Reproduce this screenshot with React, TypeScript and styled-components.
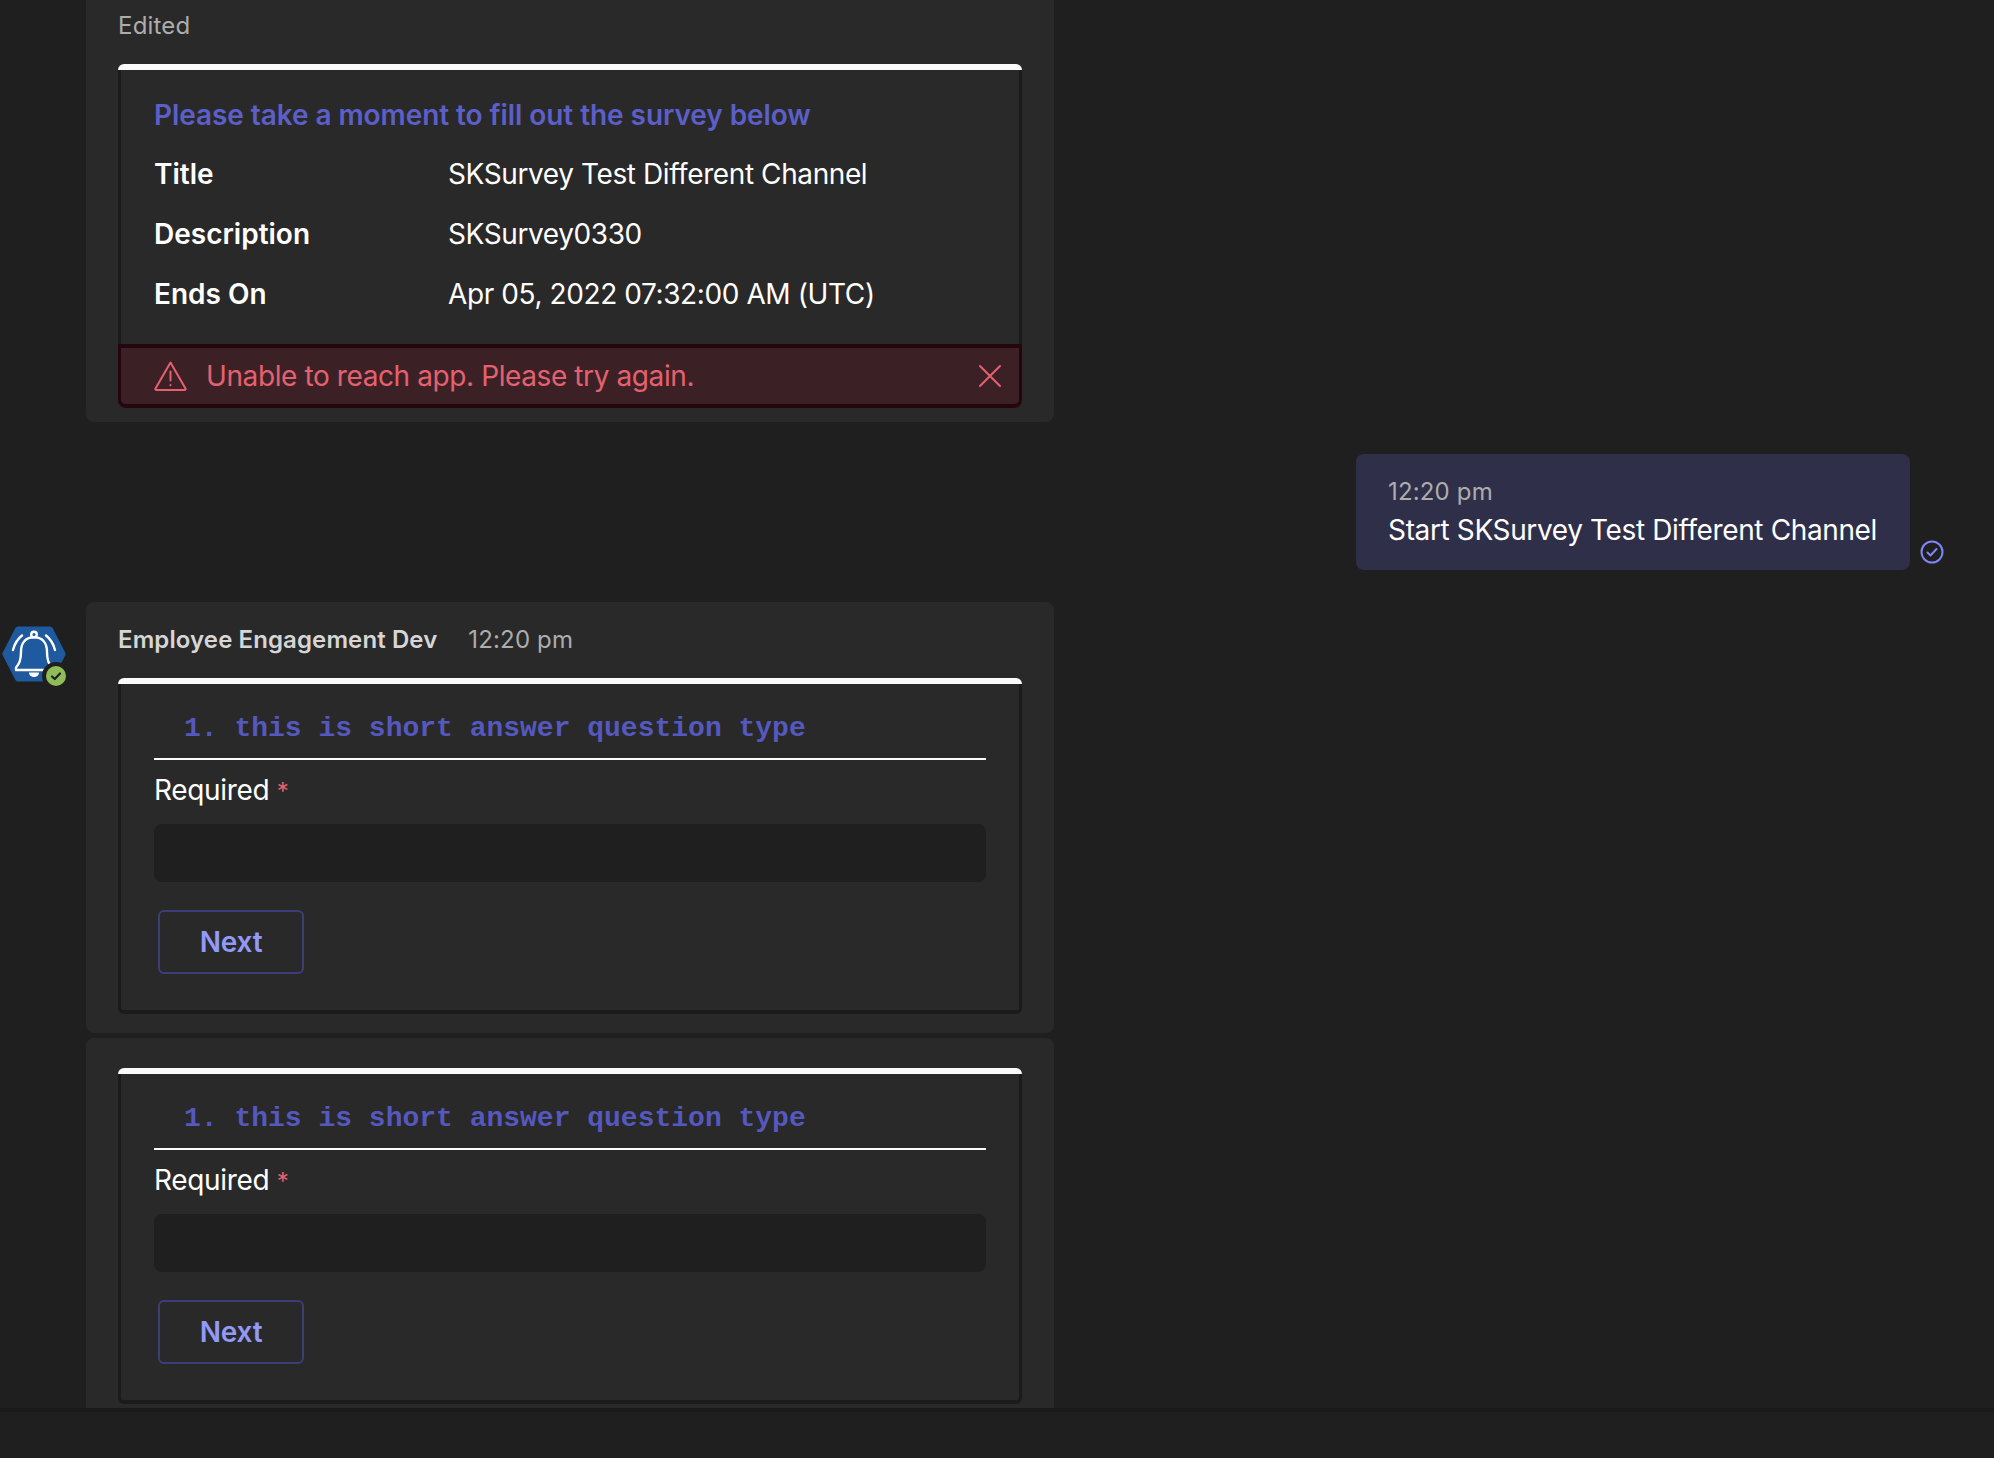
import React from "react";
import styled, { createGlobalStyle } from "styled-components";

const GlobalStyle = createGlobalStyle`
  * { box-sizing: border-box; }
  html, body { margin: 0; height: 100%; background: #1f1f1f; }
  body { font-family: Inter, "Noto Sans", sans-serif; color: #fff; overflow: hidden; }
`;

const Page = styled.div`
  height: 100vh;
  display: flex;
  flex-direction: column;
  overflow: hidden;
`;

const Chat = styled.main`
  flex: 1;
  min-height: 0;
  overflow: hidden;
  display: flex;
  flex-direction: column;
`;

const Footer = styled.footer`
  flex: 0 0 50px;
  background: #1f1f1f;
  border-top: 4px solid #1a1a1a;
`;

const Row = styled.div<{ $top?: number }>`
  display: flex;
  align-items: flex-start;
  margin-top: ${(p) => p.$top ?? 0}px;
`;

const AvatarSlot = styled.div`
  flex: 0 0 86px;
  padding: 23px 0 0 2px;
`;

const Avatar = styled.div`
  position: relative;
  width: 64px;
  height: 58px;
`;

const Badge = styled.span`
  position: absolute;
  left: 44px;
  top: 41px;
  width: 20px;
  height: 20px;
  border-radius: 50%;
  background: #8fbc58;
  box-shadow: 0 0 0 4px #1f1f1f;
  display: flex;
  align-items: center;
  justify-content: center;
`;

const Stack = styled.div`
  display: flex;
  flex-direction: column;
  gap: 5px;
`;

const Card = styled.article<{ $top: number; $bottom: number; $radius?: string }>`
  width: 968px;
  background: #292929;
  padding: ${(p) => p.$top}px 32px ${(p) => p.$bottom}px;
  border-radius: ${(p) => p.$radius ?? "8px"};
`;

const Edited = styled.div`
  font-size: 24px;
  line-height: 32px;
  letter-spacing: 0.2px;
  color: #adadad;
  margin: -6px 0 22px;
`;

const Meta = styled.div`
  display: flex;
  align-items: center;
  gap: 31px;
  height: 32px;
  margin-bottom: 22px;
`;

const Sender = styled.span`
  font-size: 24px;
  font-weight: 600;
  line-height: 32px;
  letter-spacing: 0.1px;
  color: #d6d6d6;
`;

const Time = styled.span`
  font-size: 24px;
  line-height: 32px;
  letter-spacing: 0.15px;
  color: #adadad;
`;

const Panel = styled.section`
  border-top: 6px solid #fafafa;
  border-radius: 6px;
  background: #292929;
`;

const PanelBody = styled.div<{ $flush?: boolean }>`
  border-style: solid;
  border-color: #1b1b1b;
  border-width: 0 3px ${(p) => (p.$flush ? 0 : 4)}px;
  border-radius: ${(p) => (p.$flush ? "0" : "0 0 6px 6px")};
`;

const Survey = styled.div`
  padding: 27px 33px 32px;
`;

const Heading = styled.h2`
  margin: 0 0 23px;
  font-size: 28px;
  line-height: 36px;
  font-weight: 600;
  letter-spacing: -0.07px;
  color: #5b5fc7;
`;

const Facts = styled.dl`
  margin: 0;
  display: grid;
  grid-template-columns: 294px 1fr;
  row-gap: 24px;
  font-size: 28px;
  line-height: 36px;
`;

const FactLabel = styled.dt`
  font-weight: 600;
`;

const FactValue = styled.dd`
  margin: 0;
  letter-spacing: -0.4px;
`;

const ErrorBanner = styled.div`
  height: 64px;
  display: flex;
  align-items: center;
  padding: 0 18px 0 33px;
  background: #3b2126;
  border: solid #25060e;
  border-width: 4px 3px;
  border-radius: 0 0 8px 8px;
  color: #e5616f;
  font-size: 28px;
  letter-spacing: -0.4px;
`;

const ErrorText = styled.span`
  flex: 1;
  margin-left: 19px;
`;

const Form = styled.div`
  padding: 27px 33px 36px;
`;

const Question = styled.h3`
  margin: 0;
  padding: 0 0 11px 30px;
  border-bottom: 2px solid #fafafa;
  font-family: "Liberation Mono", "Courier New", monospace;
  font-size: 28px;
  line-height: 36px;
  font-weight: 700;
  color: #5558bd;
`;

const Required = styled.div`
  margin: 12px 0 14px;
  font-size: 28px;
  line-height: 36px;
  letter-spacing: -0.34px;
`;

const Star = styled.span`
  color: #e5616f;
  font-size: 24px;
`;

const AnswerInput = styled.input`
  display: block;
  width: 100%;
  height: 58px;
  border: 0;
  border-radius: 8px;
  background: #1f1f1f;
`;

const NextButton = styled.button`
  display: block;
  width: 146px;
  height: 64px;
  margin: 28px 0 0 4px;
  background: transparent;
  border: 2px solid #3d3e78;
  border-radius: 6px;
  color: #9299f7;
  font-family: inherit;
  font-size: 28px;
  font-weight: 600;
  letter-spacing: -0.2px;
`;

const OwnRow = styled.div`
  display: flex;
  justify-content: flex-end;
  align-items: flex-end;
  gap: 10px;
  padding-right: 50px;
  margin-top: 32px;
`;

const Bubble = styled.div`
  padding: 22px 33px 22px 32px;
  background: #2f2f4a;
  border-radius: 8px;
`;

const BubbleTime = styled(Time)`
  display: block;
  margin-bottom: 4px;
`;

const BubbleText = styled.div`
  font-size: 28px;
  line-height: 36px;
  letter-spacing: -0.37px;
`;

const Delivered = styled.svg`
  display: block;
  margin-bottom: 6px;
`;

function BotAvatar() {
  return (
    <Avatar>
      <svg width="64" height="58" viewBox="0 0 64 58" fill="none">
        <path d="M16 1.5h32a3 3 0 0 1 2.6 1.5l12.6 24.5a3 3 0 0 1 0 3L50.600 55a3 3 0 0 1-2.600 1.500H16a3 3 0 0 1-2.600-1.500L.800 30.500a3 3 0 0 1 0-3L13.400 3A3 3 0 0 1 16 1.500z" fill="#1f5a9e" />
        <g stroke="#fff" strokeWidth="2.400" strokeLinecap="round" strokeLinejoin="round">
          <circle cx="32" cy="9.500" r="2.800" />
          <path d="M32 12.300c-9 0-13 6.200-13 14.700 0 8-1.500 12-5 15.500V45h36v-2.500c-3.500-3.500-5-7.500-5-15.500 0-8.500-4-14.700-13-14.700z" />
          <path d="M20 10.500c-4.500 3.500-7.500 8.500-9 14.500M44 10.500c4.500 3.500 7.500 8.500 9 14.500" />
        </g>
        <path d="M27 47.500h10c0 6-10 6-10 0z" fill="#fff" />
      </svg>
      <Badge>
        <svg width="12" height="12" viewBox="0 0 12 12" fill="none">
          <path d="M2 6.500l2.800 2.500L10 3.500" stroke="#1f1f1f" strokeWidth="2.200" strokeLinecap="round" strokeLinejoin="round" />
        </svg>
      </Badge>
    </Avatar>
  );
}

function QuestionForm() {
  return (
    <Form>
      <Question>1. this is short answer question type</Question>
      <Required>
        Required <Star>*</Star>
      </Required>
      <AnswerInput aria-label="Required" />
      <NextButton>Next</NextButton>
    </Form>
  );
}

export default function App() {
  return (
    <Page>
      <GlobalStyle />
      <Chat>
        <Row>
          <AvatarSlot />
          <Card $top={16} $bottom={14} $radius="0 0 8px 8px">
            <Edited>Edited</Edited>
            <Panel>
              <PanelBody $flush>
                <Survey>
                  <Heading>Please take a moment to fill out the survey below</Heading>
                  <Facts>
                    <FactLabel>Title</FactLabel>
                    <FactValue>SKSurvey Test Different Channel</FactValue>
                    <FactLabel>Description</FactLabel>
                    <FactValue>SKSurvey0330</FactValue>
                    <FactLabel>Ends On</FactLabel>
                    <FactValue>Apr 05, 2022 07:32:00 AM (UTC)</FactValue>
                  </Facts>
                </Survey>
              </PanelBody>
              <ErrorBanner>
                <svg width="33" height="30" viewBox="0 0 33 30" fill="none" stroke="#e5616f" strokeWidth="2" strokeLinecap="round" strokeLinejoin="round">
                  <path d="M16.500 1.500L1.500 27.500a1 1 0 0 0 .9 1.500h28.200a1 1 0 0 0 .9-1.500L16.500 1.500z" />
                  <path d="M16.500 10.500v9" />
                  <path d="M16.500 24v.2" />
                </svg>
                <ErrorText>Unable to reach app. Please try again.</ErrorText>
                <svg width="22" height="22" viewBox="0 0 22 22" fill="none" stroke="#e5616f" strokeWidth="2" strokeLinecap="round">
                  <path d="M1 1l20 20M21 1L1 21" />
                </svg>
              </ErrorBanner>
            </Panel>
          </Card>
        </Row>

        <OwnRow>
          <Bubble>
            <BubbleTime>12:20 pm</BubbleTime>
            <BubbleText>Start SKSurvey Test Different Channel</BubbleText>
          </Bubble>
          <Delivered width="24" height="24" viewBox="0 0 24 24" fill="none" stroke="#7f85f5" strokeWidth="2" strokeLinecap="round" strokeLinejoin="round">
            <circle cx="12" cy="12" r="10.500" />
            <path d="M7.500 12.500l3 3 6-6.500" />
          </Delivered>
        </OwnRow>

        <Row $top={32}>
          <AvatarSlot>
            <BotAvatar />
          </AvatarSlot>
          <Stack>
            <Card $top={22} $bottom={19}>
              <Meta>
                <Sender>Employee Engagement Dev</Sender>
                <Time>12:20 pm</Time>
              </Meta>
              <Panel>
                <PanelBody>
                  <QuestionForm />
                </PanelBody>
              </Panel>
            </Card>
            <Card $top={30} $bottom={8} $radius="8px 8px 0 0">
              <Panel>
                <PanelBody>
                  <QuestionForm />
                </PanelBody>
              </Panel>
            </Card>
          </Stack>
        </Row>
      </Chat>
      <Footer />
    </Page>
  );
}
